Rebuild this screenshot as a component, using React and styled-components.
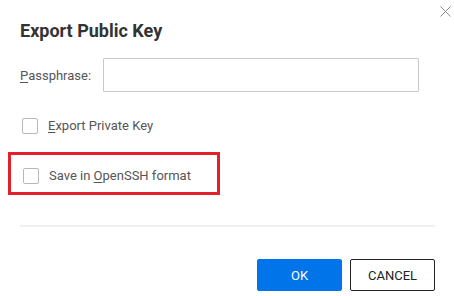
import React from 'react';
import styled, { createGlobalStyle } from 'styled-components';

const GlobalStyle = createGlobalStyle`
  html, body {
    margin: 0;
    padding: 0;
    background: #fff;
  }
  body {
    font-family: Roboto, "Liberation Sans", Arial, sans-serif;
  }
`;

const Dialog = styled.div`
  position: relative;
  box-sizing: border-box;
  width: 454px;
  height: 296px;
  padding: 0 19px 0 20px;
  background: #fff;
  overflow: hidden;
`;

const CloseButton = styled.button`
  position: absolute;
  top: 4px;
  right: 2px;
  width: 14px;
  height: 14px;
  padding: 0;
  border: none;
  background: transparent;
  cursor: pointer;
  display: flex;
  align-items: center;
  justify-content: center;
`;

const Title = styled.h1`
  margin: 19px 0 0;
  font-size: 18px;
  line-height: 24px;
  font-weight: 700;
  color: #333;
`;

const FieldRow = styled.div`
  display: flex;
  align-items: center;
  margin-top: 15px;
`;

const FieldLabel = styled.label`
  width: 83px;
  font-size: 13px;
  color: #555;
`;

const TextInput = styled.input`
  box-sizing: border-box;
  width: 316px;
  height: 34px;
  border: 1px solid #c8c8c8;
  border-radius: 1px;
  padding: 0 8px;
  font: inherit;
  outline: none;
`;

const CheckRow = styled.label`
  display: flex;
  align-items: center;
  gap: 10px;
  margin-top: ${(p) => p.$top || 0}px;
  margin-left: ${(p) => p.$left || 0}px;
  font-size: 13px;
  line-height: 16px;
  color: #555;
  cursor: pointer;
`;

const Box = styled.span`
  box-sizing: border-box;
  width: 16px;
  height: 16px;
  border: 1px solid #b8b8b8;
  border-radius: 2px;
  background: #fff;
  flex-shrink: 0;
`;

const Highlight = styled.div`
  box-sizing: border-box;
  width: 212px;
  margin: 18px 0 0 -12px;
  padding: 13px 0 8px 12px;
  border: 3px solid #e3202b;
`;

const Key = styled.u`
  text-decoration-thickness: 1px;
  text-underline-offset: 2px;
`;

const Divider = styled.hr`
  margin: 30px 0 0;
  border: none;
  height: 2px;
  background: #f0f0f0;
`;

const Footer = styled.div`
  display: flex;
  justify-content: flex-end;
  gap: 8px;
  margin-top: 32px;
`;

const Button = styled.button`
  box-sizing: border-box;
  width: 85px;
  height: 32px;
  border-radius: 2px;
  font-family: inherit;
  font-size: 13px;
  cursor: pointer;
  border: 1px solid ${(p) => (p.$primary ? '#0074e8' : '#222')};
  background: ${(p) => (p.$primary ? '#0074e8' : '#fff')};
  color: ${(p) => (p.$primary ? '#fff' : '#222')};
`;

export default function App() {
  return (
    <>
      <GlobalStyle />
      <Dialog>
        <CloseButton aria-label="Close">
          <svg width="11" height="11" viewBox="0 0 11 11">
            <path d="M0.5 0.5 L10.5 10.5 M10.5 0.5 L0.5 10.5" stroke="#8a8a8a" strokeWidth="1" />
          </svg>
        </CloseButton>
        <Title>Export Public Key</Title>
        <FieldRow>
          <FieldLabel>
            <Key>P</Key>assphrase:
          </FieldLabel>
          <TextInput type="password" />
        </FieldRow>
        <CheckRow $top={26} $left={2}>
          <Box />
          <span>
            <Key>E</Key>xport Private Key
          </span>
        </CheckRow>
        <Highlight>
          <CheckRow>
            <Box />
            <span>
              Save in <Key>O</Key>penSSH format
            </span>
          </CheckRow>
        </Highlight>
        <Divider />
        <Footer>
          <Button $primary>OK</Button>
          <Button>CANCEL</Button>
        </Footer>
      </Dialog>
    </>
  );
}
